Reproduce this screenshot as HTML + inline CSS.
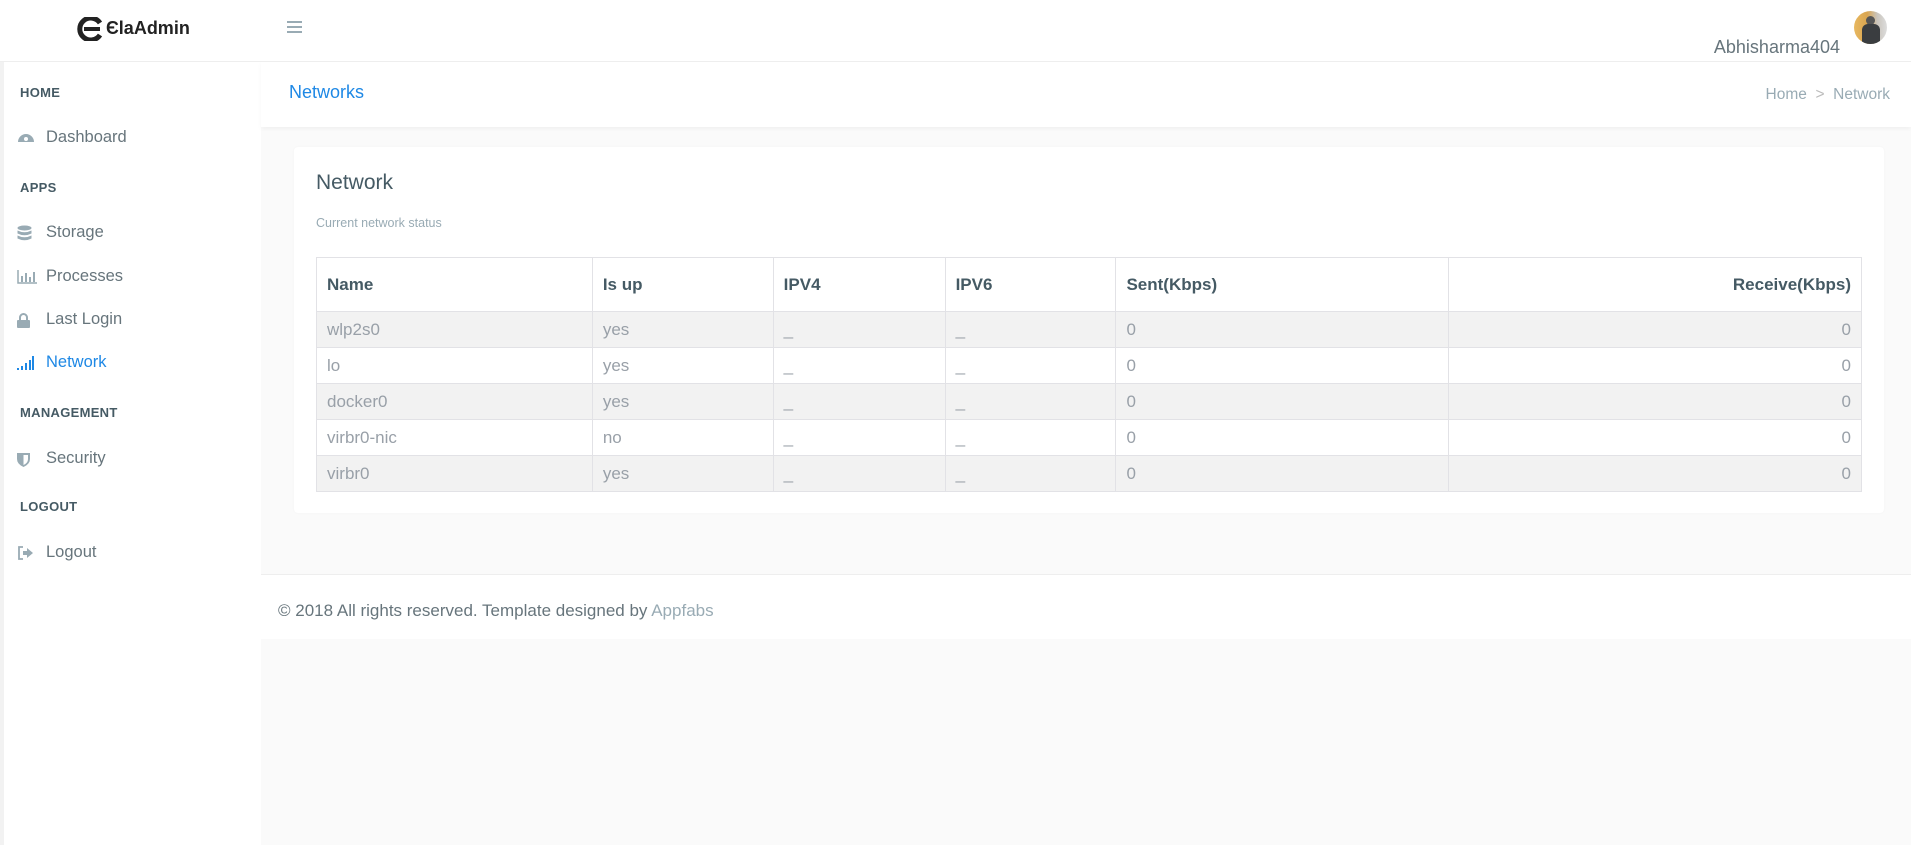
<!DOCTYPE html>
<html><head><meta charset="utf-8"><style>
*{box-sizing:border-box;margin:0;padding:0}
body{width:1911px;height:845px;background:#fafafa;font-family:"Liberation Sans",sans-serif;position:relative;overflow:hidden}
.hdr{position:absolute;left:0;top:0;width:1911px;height:62px;background:#fff;border-bottom:1px solid #eee;box-shadow:0 1px 3px rgba(0,0,0,.05)}
.side{position:absolute;left:4px;top:62px;width:257px;height:783px;background:#fff}
.lstrip{position:absolute;left:0;top:62px;width:4px;height:783px;background:#f2f2f2}
.sec{position:absolute;left:20px;font-size:13px;font-weight:bold;color:#455a64;letter-spacing:.3px}
.it{position:absolute;left:46px;font-size:16.5px;color:#67757c}
.ic{position:absolute;left:16px}
.tbar{position:absolute;left:261px;top:62px;width:1650px;height:65px;background:#fff;box-shadow:0 2px 4px rgba(0,0,0,.04)}
.card{position:absolute;left:294px;top:147px;width:1590px;height:366px;background:#fff;border-radius:4px;box-shadow:0 0 3px rgba(0,0,0,.03)}
table{position:absolute;left:316px;top:257px;width:1546px;border-collapse:collapse}
td,th{border:1px solid #e2e2e6;padding:0 10px;text-align:left}
th{height:54px;font-size:17px;font-weight:bold;color:#455a64}
td{height:36px;font-size:17px;color:#99a0a8}
tr.s td{background:#f2f2f2}
.r{text-align:right}
.foot{position:absolute;left:261px;top:574px;width:1650px;height:65px;background:#fff;border-top:1px solid #eee;font-size:17px;color:#67757c;padding:26px 0 0 17px}
</style></head><body>
<div class="hdr">
 <svg style="position:absolute;left:76px;top:17px" width="28" height="24" viewBox="0 0 28 24"><path d="M24 6A11 11 0 1 0 24 18" fill="none" stroke="#222" stroke-width="5"/><rect x="8" y="10" width="16" height="4" fill="#222"/></svg>
 <div style="position:absolute;left:106px;top:18px;font-size:18px;font-weight:bold;color:#222">ЄlaAdmin</div>
 <div style="position:absolute;left:287px;top:21px;width:15px">
  <div style="height:2px;background:#99abb4;margin-bottom:3px"></div><div style="height:2px;background:#99abb4;margin-bottom:3px"></div><div style="height:2px;background:#99abb4"></div></div>
 <div style="position:absolute;right:71px;top:37px;font-size:18px;color:#67757c">Abhisharma404</div>
 <div style="position:absolute;left:1854px;top:11px;width:33px;height:33px;border-radius:50%;overflow:hidden;background:linear-gradient(90deg,#e8b860,#d9a550 40%,#c9c4bc 70%,#ddd)">
  <div style="position:absolute;left:12px;top:5px;width:9px;height:9px;border-radius:50%;background:#555"></div>
  <div style="position:absolute;left:8px;top:13px;width:18px;height:22px;border-radius:6px 6px 0 0;background:#3a3d40"></div>
 </div>
</div>
<div class="lstrip"></div>
<div class="side">
 <div class="sec" style="top:23px;left:16px">HOME</div>
 <svg class="ic" style="top:67px;left:13px" width="18" height="14" viewBox="0 0 18 14"><path d="M1 13A8 8 0 1 1 17 13Z" fill="#99abb4"/><circle cx="9" cy="10" r="2" fill="#fff"/></svg>
 <div class="it" style="top:66px;left:42px">Dashboard</div>
 <div class="sec" style="top:118px;left:16px">APPS</div>
 <svg class="ic" style="top:163px;left:13px" width="15" height="17" viewBox="0 0 15 17"><ellipse cx="7.5" cy="3" rx="7" ry="2.5" fill="#99abb4"/><path d="M.5 5.5Q7.5 9 14.5 5.5V8.5Q7.5 12 .5 8.5Z M.5 10.5Q7.5 14 14.5 10.5V13.5Q7.5 17 .5 13.5Z" fill="#99abb4"/></svg>
 <div class="it" style="top:161px;left:42px">Storage</div>
 <svg class="ic" style="top:208px;left:13px" width="20" height="14" viewBox="0 0 20 14"><path d="M1 0V13H20" fill="none" stroke="#99abb4" stroke-width="1.5"/><rect x="4" y="6" width="2" height="6" fill="#99abb4"/><rect x="8" y="3" width="2" height="9" fill="#99abb4"/><rect x="12" y="7" width="2" height="5" fill="#99abb4"/><rect x="16" y="2" width="2" height="10" fill="#99abb4"/></svg>
 <div class="it" style="top:205px;left:42px">Processes</div>
 <svg class="ic" style="top:251px;left:13px" width="13" height="15" viewBox="0 0 13 15"><path d="M3 7V4.5A3.5 3.5 0 0 1 10 4.5V7" fill="none" stroke="#99abb4" stroke-width="2"/><rect x="0" y="7" width="13" height="8" rx="1" fill="#99abb4"/></svg>
 <div class="it" style="top:248px;left:42px">Last Login</div>
 <svg class="ic" style="top:294px;left:13px" width="18" height="14" viewBox="0 0 18 14"><rect x="0" y="12" width="2" height="2" fill="#1e88e5"/><rect x="4" y="10" width="2" height="4" fill="#1e88e5"/><rect x="8" y="7" width="2" height="7" fill="#1e88e5"/><rect x="12" y="4" width="2" height="10" fill="#1e88e5"/><rect x="15" y="0" width="2" height="14" fill="#1e88e5"/></svg>
 <div class="it" style="top:291px;left:42px;color:#1e88e5">Network</div>
 <div class="sec" style="top:343px;left:16px">MANAGEMENT</div>
 <svg class="ic" style="top:390px;left:13px" width="13" height="15" viewBox="0 0 13 15"><path d="M0 1H13V7Q13 12 6.5 15Q0 12 0 7Z" fill="#99abb4"/><path d="M6.5 3H11V7Q11 11 6.5 13Z" fill="#fff"/></svg>
 <div class="it" style="top:387px;left:42px">Security</div>
 <div class="sec" style="top:437px;left:16px">LOGOUT</div>
 <svg class="ic" style="top:484px;left:13px" width="17" height="14" viewBox="0 0 17 14"><path d="M6 1H2V13H6" fill="none" stroke="#99abb4" stroke-width="1.8"/><path d="M6 5H10V2L16 7L10 12V9H6Z" fill="#99abb4"/></svg>
 <div class="it" style="top:481px;left:42px">Logout</div>
</div>
<div class="tbar">
 <div style="position:absolute;left:28px;top:20px;font-size:18px;color:#1e88e5">Networks</div>
 <div style="position:absolute;right:21px;top:24px;font-size:15.5px;color:#99abb4">Home &nbsp;<span style="color:#bbb">&gt;</span>&nbsp; Network</div>
</div>
<div class="card">
 <div style="position:absolute;left:22px;top:24px;font-size:21px;color:#455a64">Network</div>
 <div style="position:absolute;left:22px;top:69px;font-size:12.5px;color:#99abb4">Current network status</div>
</div>
<table>
<colgroup><col style="width:276px"><col style="width:181px"><col style="width:172px"><col style="width:171px"><col style="width:333px"><col style="width:413px"></colgroup>
<tr><th>Name</th><th>Is up</th><th>IPV4</th><th>IPV6</th><th>Sent(Kbps)</th><th class="r">Receive(Kbps)</th></tr>
<tr class="s"><td>wlp2s0</td><td>yes</td><td>_</td><td>_</td><td>0</td><td class="r">0</td></tr>
<tr><td>lo</td><td>yes</td><td>_</td><td>_</td><td>0</td><td class="r">0</td></tr>
<tr class="s"><td>docker0</td><td>yes</td><td>_</td><td>_</td><td>0</td><td class="r">0</td></tr>
<tr><td>virbr0-nic</td><td>no</td><td>_</td><td>_</td><td>0</td><td class="r">0</td></tr>
<tr class="s"><td>virbr0</td><td>yes</td><td>_</td><td>_</td><td>0</td><td class="r">0</td></tr>
</table>
<div class="foot">© 2018 All rights reserved. Template designed by <span style="color:#99abb4">Appfabs</span></div>
</body></html>
